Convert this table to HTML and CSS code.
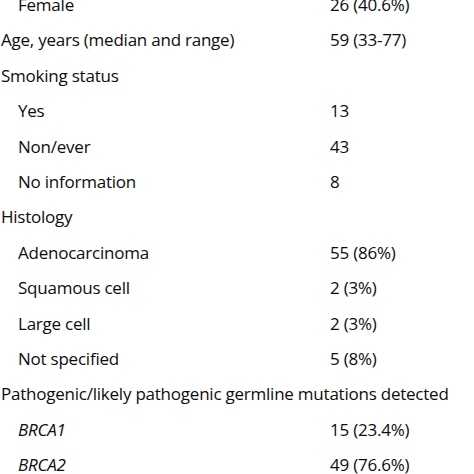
FILE: index.html
```html
<!DOCTYPE html>
<html>
<head>
<meta charset="utf-8">
<link rel="stylesheet" href="styles.css">
</head>
<body>
<div class="table">
  <div class="cell sub">Female</div><div class="cell val">26 (40.6%)</div>
  <div class="cell">Age, years (median and range)</div><div class="cell val">59 (33-77)</div>
  <div class="cell">Smoking status</div><div class="cell val"></div>
  <div class="cell sub">Yes</div><div class="cell val">13</div>
  <div class="cell sub">Non/ever</div><div class="cell val">43</div>
  <div class="cell sub">No information</div><div class="cell val">8</div>
  <div class="cell">Histology</div><div class="cell val"></div>
  <div class="cell sub">Adenocarcinoma</div><div class="cell val">55 (86%)</div>
  <div class="cell sub">Squamous cell</div><div class="cell val">2 (3%)</div>
  <div class="cell sub">Large cell</div><div class="cell val">2 (3%)</div>
  <div class="cell sub">Not specified</div><div class="cell val">5 (8%)</div>
  <div class="cell span">Pathogenic/likely pathogenic germline mutations detected</div>
  <div class="cell sub gene">BRCA1</div><div class="cell val">15 (23.4%)</div>
  <div class="cell sub gene">BRCA2</div><div class="cell val">49 (76.6%)</div>
</div>
</body>
</html>
```
FILE: styles.css
```css
html, body {
  margin: 0;
  padding: 0;
  background: #ffffff;
  overflow: hidden;
}
body {
  font-family: "Open Sans", "Noto Sans", sans-serif;
  font-size: 17px;
  font-weight: 400;
  letter-spacing: -0.23px;
  color: #0d0d0d;
}
.table {
  display: grid;
  grid-template-columns: 330px 1fr;
  grid-auto-rows: 35.4px;
  margin-top: -13px;
}
.cell {
  line-height: 35.4px;
  white-space: nowrap;
  padding-left: 1px;
}
.sub {
  padding-left: 18px;
}
.val {
  padding-left: 0;
}
.span {
  grid-column: 1 / 3;
}
.gene {
  font-style: italic;
}
```
